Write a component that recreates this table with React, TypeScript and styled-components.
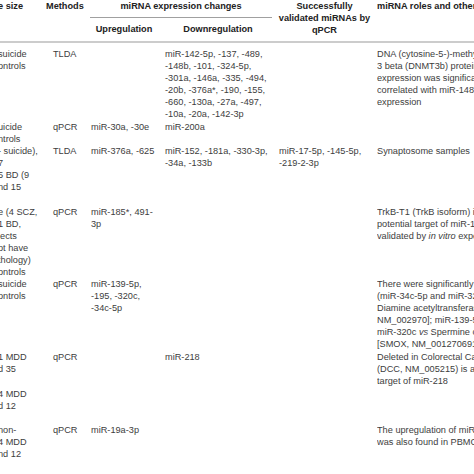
import React from "react";
import styled, { createGlobalStyle } from "styled-components";

const Global = createGlobalStyle`
  html, body { margin: 0; padding: 0; background: #ffffff; }
  body { font-family: "Liberation Sans", Arial, sans-serif; overflow: hidden; }
`;

const COLS = "46px 44px 74px 108px 105px 1fr";

const Page = styled.div`
  width: 474px;
  height: 474px;
  overflow: hidden;
  background: #fff;
`;

const Header = styled.div`
  display: grid;
  grid-template-columns: ${COLS};
  grid-template-rows: auto auto;
  border-bottom: 2px solid #cccccc;
  padding-bottom: 5px;
  font-weight: 700;
  font-size: 9.2px;
  line-height: 12px;
  color: #222222;
  white-space: nowrap;
`;

const HeadCell = styled.div<{ $col: string; $align?: string; $ml?: number }>`
  grid-column: ${(p) => p.$col};
  grid-row: 1 / span 2;
  text-align: ${(p) => p.$align || "left"};
  margin-left: ${(p) => p.$ml || 0}px;
  overflow: hidden;
`;

const GroupHead = styled.div`
  grid-column: 3 / span 2;
  grid-row: 1;
  text-align: center;
  padding-bottom: 4px;
  border-bottom: 1px solid #a0a0a0;
`;

const SubHead = styled.div<{ $col: number; $pr?: number }>`
  grid-column: ${(p) => p.$col};
  grid-row: 2;
  text-align: center;
  padding-top: 5px;
  padding-right: ${(p) => p.$pr || 0}px;
`;

const Body = styled.div`
  padding-top: 5px;
  font-size: 9.2px;
  line-height: 12px;
  color: #3d3d3d;
`;

const Row = styled.div<{ $lines?: number }>`
  display: grid;
  grid-template-columns: ${COLS};
  align-items: start;
  padding-bottom: 0.6px;
  min-height: ${(p) => (p.$lines || 0) * 12}px;
`;

const Cell = styled.div<{ $pl?: number; $ml?: number }>`
  padding-left: ${(p) => p.$pl || 0}px;
  margin-left: ${(p) => p.$ml || 0}px;
  white-space: nowrap;
  overflow: hidden;
`;

const Line = styled.div`
  height: 12px;
`;

type RowData = {
  lines?: number;
  c1: string[];
  method?: string;
  up?: string[];
  down?: string[];
  valid?: string[];
  roles?: React.ReactNode[];
};

const rows: RowData[] = [
  {
    c1: ["suicide", "ontrols"],
    method: "TLDA",
    down: [
      "miR-142-5p, -137, -489,",
      "-148b, -101, -324-5p,",
      "-301a, -146a, -335, -494,",
      "-20b, -376a*, -190, -155,",
      "-660, -130a, -27a, -497,",
      "-10a, -20a, -142-3p",
    ],
    roles: [
      "DNA (cytosine-5-)-methyltransferase",
      "3 beta (DNMT3b) protein",
      "expression was significantly",
      "correlated with miR-148b",
      "expression",
    ],
  },
  {
    c1: ["uicide", "ntrols"],
    method: "qPCR",
    up: ["miR-30a, -30e"],
    down: ["miR-200a"],
  },
  {
    lines: 5,
    c1: ["- suicide),", "7", "5 BD (9", "nd 15"],
    method: "TLDA",
    up: ["miR-376a, -625"],
    down: ["miR-152, -181a, -330-3p,", "-34a, -133b"],
    valid: ["miR-17-5p, -145-5p,", "-219-2-3p"],
    roles: ["Synaptosome samples"],
  },
  {
    c1: ["e (4 SCZ,", "1 BD,", "jects", "ot have", "thology)", "ontrols"],
    method: "qPCR",
    up: ["miR-185*, 491-", "3p"],
    roles: [
      "TrkB-T1 (TrkB isoform) is a",
      "potential target of miR-185*",
      <>validated by <i>in vitro</i> experiments</>,
    ],
  },
  {
    c1: ["suicide", "ontrols"],
    method: "qPCR",
    up: ["miR-139-5p,", "-195, -320c,", "-34c-5p"],
    roles: [
      "There were significantly correlations",
      "(miR-34c-5p and miR-320c vs",
      "Diamine acetyltransferase 1 [SAT1,",
      "NM_002970]; miR-139-5p and",
      <>miR-320c <i>vs</i> Spermine oxidase</>,
      "[SMOX, NM_001270691]",
    ],
  },
  {
    c1: ["1 MDD", "d 35"],
    method: "qPCR",
    down: ["miR-218"],
    roles: ["Deleted in Colorectal Cancer", "(DCC, NM_005215) is a", "target of miR-218"],
  },
  {
    lines: 3,
    c1: ["4 MDD", "d 12"],
  },
  {
    c1: ["non-", "4 MDD", "nd 12"],
    method: "qPCR",
    up: ["miR-19a-3p"],
    roles: ["The upregulation of miR-19a-3p", "was also found in PBMCs"],
  },
];

const Lines = ({ items }: { items?: React.ReactNode[] }) => (
  <>
    {(items || []).map((t, i) => (
      <Line key={i}>{t}</Line>
    ))}
  </>
);

export default function App() {
  return (
    <Page>
      <Global />
      <Header>
        <HeadCell $col="1" $ml={-2}>e size</HeadCell>
        <HeadCell $col="2">Methods</HeadCell>
        <GroupHead>miRNA expression changes</GroupHead>
        <SubHead $col={3} $pr={6}>Upregulation</SubHead>
        <SubHead $col={4}>Downregulation</SubHead>
        <HeadCell $col="5" $align="center">
          Successfully
          <br />
          validated miRNAs by
          <br />
          qPCR
        </HeadCell>
        <HeadCell $col="6">miRNA roles and other information</HeadCell>
      </Header>
      <Body>
        {rows.map((r, i) => (
          <Row key={i} $lines={r.lines}>
            <Cell $ml={-2}>
              <Lines items={r.c1} />
            </Cell>
            <Cell $pl={7}>
              <Lines items={r.method ? [r.method] : []} />
            </Cell>
            <Cell $pl={1}>
              <Lines items={r.up} />
            </Cell>
            <Cell $pl={1}>
              <Lines items={r.down} />
            </Cell>
            <Cell $pl={7}>
              <Lines items={r.valid} />
            </Cell>
            <Cell>
              <Lines items={r.roles} />
            </Cell>
          </Row>
        ))}
      </Body>
    </Page>
  );
}
